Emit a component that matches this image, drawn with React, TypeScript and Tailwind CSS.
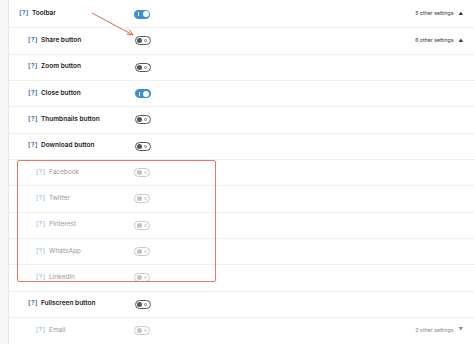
import React from 'react';

type Row = {
  label: string;
  level: 0 | 1 | 2;
  state: 'on' | 'off' | 'disabled';
  extra?: string;
  open?: boolean;
};

const rows: Row[] = [
  { label: 'Toolbar', level: 0, state: 'on', extra: '5 other settings', open: true },
  { label: 'Share button', level: 1, state: 'off', extra: '6 other settings', open: true },
  { label: 'Zoom button', level: 1, state: 'off' },
  { label: 'Close button', level: 1, state: 'on' },
  { label: 'Thumbnails button', level: 1, state: 'off' },
  { label: 'Download button', level: 1, state: 'off' },
  { label: 'Facebook', level: 2, state: 'disabled' },
  { label: 'Twitter', level: 2, state: 'disabled' },
  { label: 'Pinterest', level: 2, state: 'disabled' },
  { label: 'WhatsApp', level: 2, state: 'disabled' },
  { label: 'LinkedIn', level: 2, state: 'disabled' },
  { label: 'Fullscreen button', level: 1, state: 'off' },
  { label: 'Email', level: 2, state: 'disabled', extra: '2 other settings', open: false },
];

// label column: indent + width so every toggle lines up at x=135
const indent = ['pl-[10px] w-[125px]', 'pl-[19px] w-[125.5px]', 'pl-[27px] w-[125px]'];

function Toggle({ state }: { state: Row['state'] }) {
  if (state === 'on') {
    return (
      <span className="relative flex h-[9px] w-[16px] shrink-0 items-center rounded-full bg-[#3d8fd6]">
        <span className="ml-[4px] h-[4px] w-[1px] bg-white" />
        <span className="absolute right-[1.5px] h-[6px] w-[6px] rounded-full bg-white" />
      </span>
    );
  }
  const dim = state === 'disabled';
  return (
    <span
      className={
        'relative flex h-[9px] w-[16px] shrink-0 items-center rounded-full border bg-white ' +
        (dim ? 'border-[#c9c9c9]' : 'border-[#555]')
      }
    >
      <span
        className={
          'ml-[1.5px] h-[5px] w-[5px] rounded-full ' + (dim ? 'bg-[#c4c4c4]' : 'bg-[#555]')
        }
      />
      <span
        className={
          'absolute right-[2.5px] h-[3px] w-[3px] rounded-full border-[0.8px] ' +
          (dim ? 'border-[#c9c9c9]' : 'border-[#777]')
        }
      />
    </span>
  );
}

export default function App() {
  return (
    <div className="relative flex h-[344px] w-[474px] overflow-hidden bg-white font-['Inter',sans-serif]">
      <div className="w-[9px] shrink-0 border-r border-[#e8e8e8] bg-[#f6f6f6]" />
      <div className="flex-1 pt-[1px]">
        {rows.map((r, i) => {
          const dim = r.state === 'disabled';
          return (
            <div
              key={r.label}
              className={
                'flex h-[26.33px] items-center pr-[10px] ' +
                (i > 0 ? 'border-t border-[#f0f0f0]' : '')
              }
            >
              <div className={'flex shrink-0 items-center ' + indent[r.level]}>
                <span
                  className={
                    'w-[13px] text-[6.5px] tracking-[0.5px] ' +
                    (dim ? 'text-[#8fb1da]' : 'font-semibold text-[#3b6fb0]')
                  }
                >
                  [?]
                </span>
                <span
                  className={
                    'text-[6.5px] ' + (dim ? 'text-[#9a9a9a]' : 'font-semibold text-[#222]')
                  }
                >
                  {r.label}
                </span>
              </div>
              <Toggle state={r.state} />
              {r.extra && (
                <div
                  className={
                    'ml-auto mr-[1px] flex items-center gap-[5px] text-[5.2px] ' +
                    (dim ? 'text-[#888]' : 'text-[#333]')
                  }
                >
                  <span>{r.extra}</span>
                  <span className="text-[4.5px]">{r.open ? '▲' : '▼'}</span>
                </div>
              )}
            </div>
          );
        })}
      </div>

      <div className="pointer-events-none absolute left-[17px] top-[160px] h-[122px] w-[199px] rounded-[2px] border-[1.5px] border-[#df7a62]" />

      <svg className="pointer-events-none absolute left-0 top-0" width="474" height="344">
        <line x1="92" y1="13" x2="133" y2="35" stroke="#df6a50" strokeWidth="1" />
        <path d="M133 35 L126.5 34.2 M133 35 L129.3 29.6" stroke="#df6a50" strokeWidth="1" fill="none" />
      </svg>
    </div>
  );
}
